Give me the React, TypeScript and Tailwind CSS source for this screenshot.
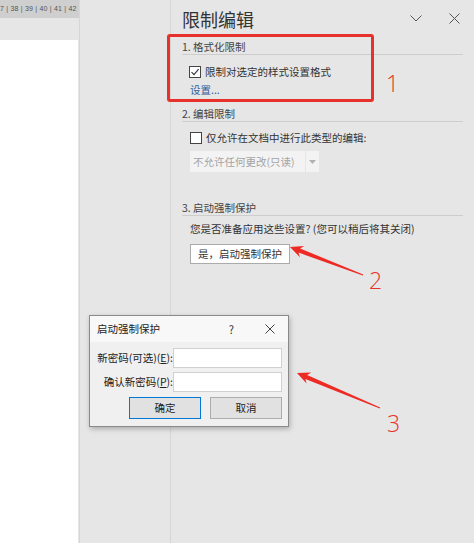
import React from 'react'

type Pt = [number, number]

// tapered red annotation arrow: thin at the tail, barbed head at the tip
function arrowPoints(tip: Pt, tail: Pt) {
  const dx = tail[0] - tip[0]
  const dy = tail[1] - tip[1]
  const len = Math.hypot(dx, dy)
  const ux = dx / len
  const uy = dy / len
  const nx = -uy
  const ny = ux
  const head = 13
  const base: Pt = [tip[0] + ux * head, tip[1] + uy * head]
  const neck: Pt = [tip[0] + ux * (head - 3), tip[1] + uy * (head - 3)]
  const p = (pt: Pt, w: number): string => `${(pt[0] + nx * w).toFixed(1)},${(pt[1] + ny * w).toFixed(1)}`
  return [
    `${tip[0]},${tip[1]}`,
    p(base, 6),
    p(neck, 2.2),
    p(tail, 0.6),
    p(tail, -0.6),
    p(neck, -2.2),
    p(base, -6),
  ].join(' ')
}

function CheckBox({ checked }: { checked?: boolean }) {
  return (
    <span className="w-[12px] h-[12px] border border-[#444] bg-white flex items-center justify-center shrink-0">
      {checked && (
        <svg width="10" height="10" viewBox="0 0 10 10">
          <path d="M1.5 5.2 L4 7.6 L8.6 2.2" fill="none" stroke="#333" strokeWidth="1.1" />
        </svg>
      )}
    </span>
  )
}

function SectionHead({ children }: { children: React.ReactNode }) {
  return (
    <div className="text-[10.5px] leading-[12px] text-[#444] pb-[1px] border-b border-[#cdcdcd]">{children}</div>
  )
}

export default function App() {
  const font = { fontFamily: '"Noto Sans CJK SC", "Noto Sans", sans-serif' }

  return (
    <div className="relative w-[474px] h-[543px] overflow-hidden flex bg-[#e6e6e6]" style={font}>
      {/* document page with ruler */}
      <div className="w-[79px] flex flex-col shrink-0">
        <div className="h-[18px] bg-[#cfcfcf] flex items-center overflow-hidden whitespace-nowrap text-[7px] text-[#555] tracking-[0.2px]" style={{ fontFamily: '"Liberation Sans", sans-serif' }}>
          7 | 38 | 39 | 40 | 41 | 42
        </div>
        <div className="h-[22px]" />
        <div className="flex-1 w-[78px] bg-white" />
      </div>

      {/* gap between page and pane */}
      <div className="w-[92px] shrink-0 border-l border-[#d6d6d6] border-r border-[#cecece]" />

      {/* restrict editing pane */}
      <div className="flex-1 pl-[11px] pr-[11px] flex flex-col">
        <div className="h-[41px] flex items-center justify-between">
          <span className="text-[18px] leading-[22px] text-[#333] -mt-[3px]">限制编辑</span>
          <div className="flex items-center gap-[27px] -mt-[5px] pr-[3px]">
            <svg width="12" height="7" viewBox="0 0 12 7">
              <path d="M0.5 0.5 L6 6 L11.5 0.5" fill="none" stroke="#555" strokeWidth="1" />
            </svg>
            <svg width="11" height="11" viewBox="0 0 11 11">
              <path d="M0.5 0.5 L10.5 10.5 M10.5 0.5 L0.5 10.5" fill="none" stroke="#555" strokeWidth="1" />
            </svg>
          </div>
        </div>

        <SectionHead>1. 格式化限制</SectionHead>
        <div className="mt-[10px] ml-[7px] flex items-center gap-[4px] h-[13px]">
          <CheckBox checked />
          <span className="text-[10.5px] leading-[12px] text-[#333]">限制对选定的样式设置格式</span>
        </div>
        <div className="mt-[6px] ml-[8px] text-[10.5px] leading-[12px] text-[#2f5d9a]">设置...</div>

        <div className="mt-[12px]">
          <SectionHead>2. 编辑限制</SectionHead>
        </div>
        <div className="mt-[10px] ml-[8px] flex items-center gap-[4px] h-[12px]">
          <CheckBox />
          <span className="text-[10.5px] leading-[12px] text-[#333]">仅允许在文档中进行此类型的编辑:</span>
        </div>
        <div className="mt-[7px] ml-[8px] w-[129px] h-[21px] bg-[#f3f3f3] flex items-center">
          <span className="flex-1 pl-[3px] text-[10.5px] text-[#a3a3a3] whitespace-nowrap">不允许任何更改(只读)</span>
          <span className="w-[14px] h-full border-l border-[#e6e6e6] flex items-center justify-center">
            <svg width="7" height="4" viewBox="0 0 7 4">
              <path d="M0 0 H7 L3.5 4 Z" fill="#b0b0b0" />
            </svg>
          </span>
        </div>

        <div className="mt-[30px]">
          <SectionHead>3. 启动强制保护</SectionHead>
        </div>
        <div className="mt-[7px] ml-[8px] text-[10.5px] leading-[12px] text-[#333] whitespace-nowrap">
          您是否准备应用这些设置? (您可以稍后将其关闭)
        </div>
        <div className="mt-[9px] ml-[8px] w-[100px] h-[20px] bg-white border border-[#ababab] flex items-center justify-center text-[10.5px] text-[#333]">
          是，启动强制保护
        </div>
      </div>

      {/* annotation: red box around section 1 */}
      <div className="absolute left-[167px] top-[34px] w-[207px] h-[68px] border-[3px] border-[#e8312b] rounded-[3px]" />

      {/* annotation numbers */}
      <span className="absolute left-[386px] top-[70px] text-[23px] leading-[26px] text-[#e8312b] font-light" style={{ fontFamily: '"Open Sans", sans-serif' }}>1</span>
      <span className="absolute left-[369px] top-[267px] text-[23px] leading-[26px] text-[#e8312b] font-light" style={{ fontFamily: '"Open Sans", sans-serif' }}>2</span>
      <span className="absolute left-[387px] top-[410px] text-[23px] leading-[26px] text-[#e8312b] font-light" style={{ fontFamily: '"Open Sans", sans-serif' }}>3</span>

      {/* annotation arrows */}
      <svg className="absolute inset-0 pointer-events-none" width="474" height="543" viewBox="0 0 474 543">
        <polygon points={arrowPoints([290, 247], [363, 275])} fill="#ee2a24" />
        <polygon points={arrowPoints([297, 373], [380, 408])} fill="#ee2a24" />
      </svg>

      {/* start enforcing protection dialog */}
      <div className="absolute left-[89px] top-[315px] w-[200px] h-[112px] border border-[#8a8a8a] bg-[#f0f0f0] shadow-[1px_2px_5px_rgba(0,0,0,0.25)] flex flex-col">
        <div className="h-[26px] bg-[#f8f8f8] flex items-center pl-[7px] pr-[13px]">
          <span className="flex-1 text-[10.5px] text-[#222]">启动强制保护</span>
          <span className="text-[11px] text-[#333] mr-[31px]">?</span>
          <svg width="10" height="10" viewBox="0 0 10 10">
            <path d="M0.5 0.5 L9.5 9.5 M9.5 0.5 L0.5 9.5" fill="none" stroke="#444" strokeWidth="1" />
          </svg>
        </div>
        <div className="flex flex-col pl-[6px] pr-[6px] pt-[6px] gap-[4px]">
          <div className="flex items-center">
            <span className="w-[77px] text-right text-[10.5px] text-[#222] whitespace-nowrap">
              新密码(可选)(<span className="underline">E</span>):
            </span>
            <span className="w-[109px] h-[20px] bg-white border border-[#d0d0d0]" />
          </div>
          <div className="flex items-center">
            <span className="w-[77px] text-right text-[10.5px] text-[#222] whitespace-nowrap">
              确认新密码(<span className="underline">P</span>):
            </span>
            <span className="w-[109px] h-[20px] bg-white border border-[#d0d0d0]" />
          </div>
          <div className="flex items-center gap-[9px] pl-[33px] mt-[1px]">
            <span className="w-[72px] h-[22px] bg-[#e1e1e1] border border-[#0078d7] flex items-center justify-center text-[10.5px] text-[#222]">确定</span>
            <span className="w-[72px] h-[22px] bg-[#e1e1e1] border border-[#adadad] flex items-center justify-center text-[10.5px] text-[#222]">取消</span>
          </div>
        </div>
      </div>
    </div>
  )
}
